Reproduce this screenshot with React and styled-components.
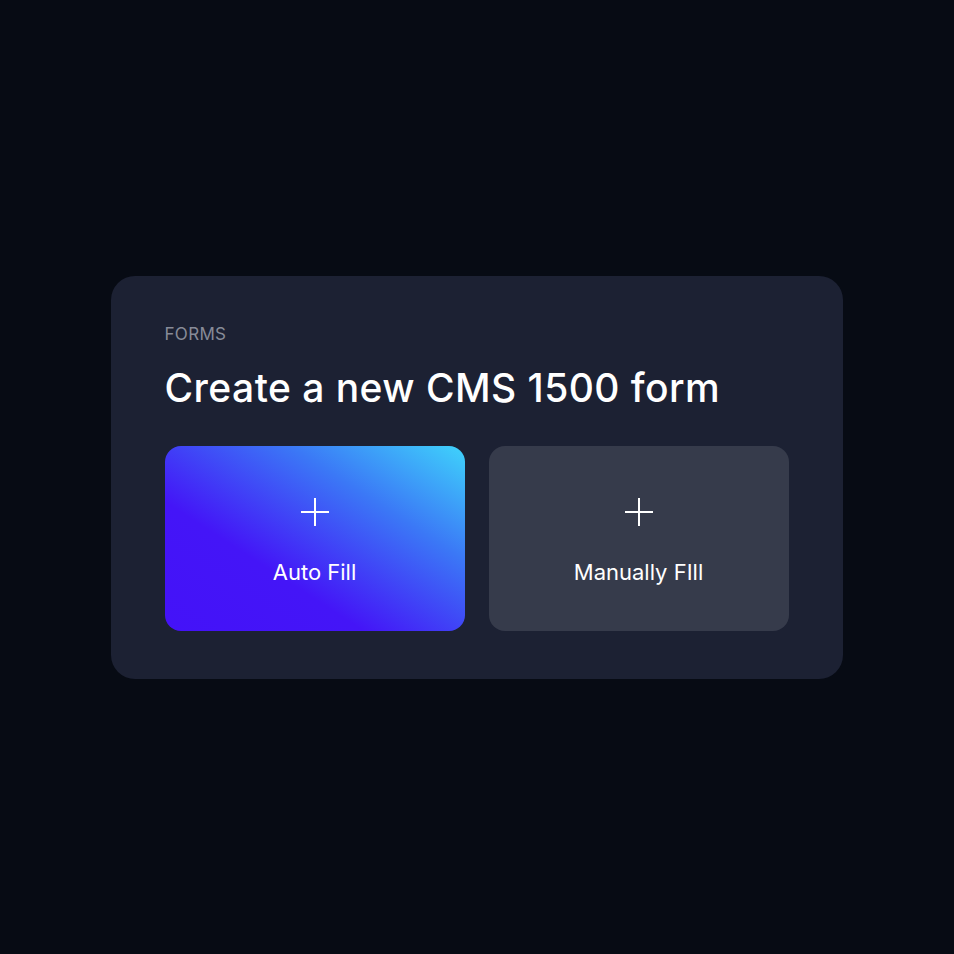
import styled, { createGlobalStyle } from "styled-components";

const GlobalStyle = createGlobalStyle`
  html, body {
    margin: 0;
    padding: 0;
    background: #070b14;
  }
  body {
    font-family: Inter, "Noto Sans", sans-serif;
    -webkit-font-smoothing: antialiased;
  }
`;

const Page = styled.div`
  width: 954px;
  height: 954px;
  display: flex;
  align-items: center;
  justify-content: center;
  background: #070b14;
`;

const Card = styled.div`
  width: 732px;
  box-sizing: border-box;
  margin-right: 1px;
  padding: 48px 54px 48px;
  background: #1c2133;
  border-radius: 24px;
`;

const Label = styled.div`
  font-size: 17px;
  font-weight: 400;
  color: #878b98;
  letter-spacing: 0.3px;
  line-height: 20px;
`;

const Title = styled.h1`
  margin: 21px 0 0;
  font-size: 39px;
  font-weight: 500;
  color: #ffffff;
  letter-spacing: 0.45px;
  line-height: 46px;
`;

const Options = styled.div`
  margin-top: 35px;
  display: grid;
  grid-template-columns: 300px 300px;
  gap: 24px;
`;

const Option = styled.button`
  height: 185px;
  border: none;
  border-radius: 16px;
  display: flex;
  flex-direction: column;
  align-items: center;
  justify-content: center;
  gap: 32px;
  padding: 5px 0 0;
  color: #ffffff;
  font-family: inherit;
  font-size: 22px;
  font-weight: 400;
  line-height: 26px;
  cursor: pointer;
  background: ${(p) =>
    p.$primary
      ? "linear-gradient(33deg, #4412f8 0%, #4415f7 34%, #3b78f6 70%, #3fd3fb 100%)"
      : "#363b4b"};
`;

const PlusIcon = () => (
  <svg width="30" height="30" viewBox="0 0 30 30" fill="none">
    <path d="M15 1v28M1 15h28" stroke="#fff" strokeWidth="2" />
  </svg>
);

export default function App() {
  return (
    <>
      <GlobalStyle />
      <Page>
        <Card>
          <Label>FORMS</Label>
          <Title>Create a new CMS 1500 form</Title>
          <Options>
            <Option $primary>
              <PlusIcon />
              Auto Fill
            </Option>
            <Option>
              <PlusIcon />
              Manually FIll
            </Option>
          </Options>
        </Card>
      </Page>
    </>
  );
}
